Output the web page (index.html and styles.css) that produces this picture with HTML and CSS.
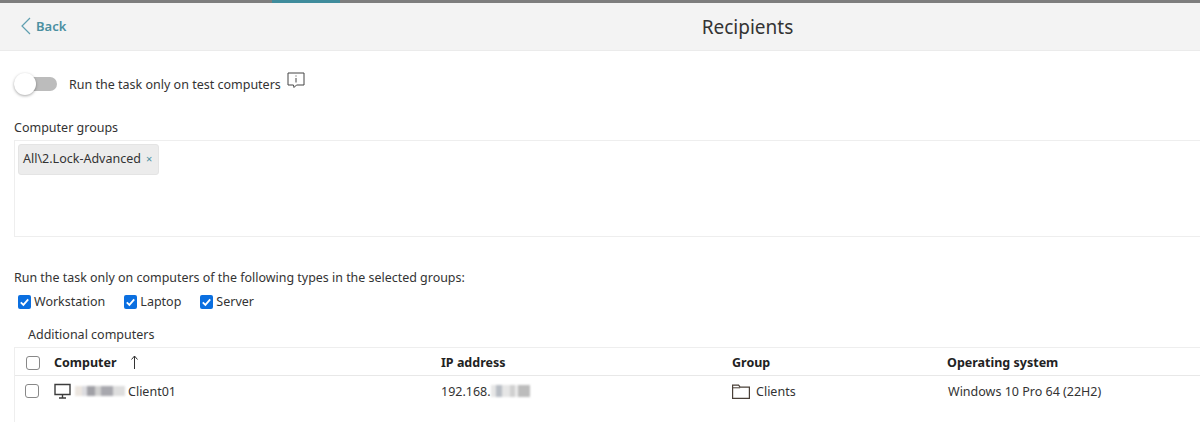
FILE: index.html
```html
<!DOCTYPE html>
<html lang="en">
<head>
    <meta charset="UTF-8">
    <title>Recipients</title>
    <link rel="stylesheet" href="styles.css">
</head>
<body>
    <div class="top-strip"><div class="top-strip-active"></div></div>
    <header class="header">
        <a class="back">
            <svg class="back-icon" width="10" height="18" viewBox="0 0 10 18"><path d="M9 1 1 9l8 8" fill="none" stroke="#5f9fb0" stroke-width="1.2"/></svg>
            Back
        </a>
        <h1 class="title">Recipients</h1>
    </header>
    <main class="content">
        <div class="test-row">
            <span class="switch"><span class="switch-knob"></span></span>
            <span>Run the task only on test computers</span>
            <svg class="info-icon" width="18" height="17" viewBox="0 0 18 17"><path d="M1 1h16v12H9.5L7 15.5 6.5 13H1z" fill="none" stroke="#444" stroke-width="1"/><path d="M9 3.5v1M9 6v4.5" stroke="#444" stroke-width="1"/></svg>
        </div>

        <div class="field-label">Computer groups</div>
        <div class="group-box">
            <span class="tag">All\2.Lock-Advanced<span class="tag-x">×</span></span>
        </div>

        <div class="types-label">Run the task only on computers of the following types in the selected groups:</div>
        <div class="types">
            <label class="type"><span class="check"><svg width="13" height="14" viewBox="0 0 13 14"><path d="M2.8 7.3 5.4 9.9 10.2 4.3" fill="none" stroke="#fff" stroke-width="1.8"/></svg></span>Workstation</label>
            <label class="type"><span class="check"><svg width="13" height="14" viewBox="0 0 13 14"><path d="M2.8 7.3 5.4 9.9 10.2 4.3" fill="none" stroke="#fff" stroke-width="1.8"/></svg></span>Laptop</label>
            <label class="type"><span class="check"><svg width="13" height="14" viewBox="0 0 13 14"><path d="M2.8 7.3 5.4 9.9 10.2 4.3" fill="none" stroke="#fff" stroke-width="1.8"/></svg></span>Server</label>
        </div>

        <div class="additional">Additional computers</div>
        <div class="table">
            <div class="table-row table-head">
                <div class="cell-check"><span class="box"></span></div>
                <div class="cell-computer">Computer
                    <svg class="sort-icon" width="9" height="14" viewBox="0 0 9 14"><path d="M4.5 1v13M1.5 4.5l3-3.5 3 3.5" fill="none" stroke="#333" stroke-width="1"/></svg>
                </div>
                <div class="cell-ip">IP address</div>
                <div class="cell-group">Group</div>
                <div class="cell-os">Operating system</div>
            </div>
            <div class="table-row table-body">
                <div class="cell-check"><span class="box box-body"></span></div>
                <div class="cell-computer">
                    <svg class="pc-icon" width="17" height="16" viewBox="0 0 17 16"><path d="M1 1.5h15v10H1z" fill="none" stroke="#3c3c3c" stroke-width="1.4"/><path d="M8.5 12v2.5M5 15h7" fill="none" stroke="#3c3c3c" stroke-width="1.4"/></svg>
                    <span class="blur blur-name"></span>Client01
                </div>
                <div class="cell-ip">192.168.<span class="blur blur-ip"></span></div>
                <div class="cell-group">
                    <svg class="folder-icon" width="18" height="15" viewBox="0 0 18 15"><path d="M.6 14.4V1.2h6l1.5 2h9.3v11.2z" fill="none" stroke="#4a4038" stroke-width="1.2"/><path d="M.6 3.8h7.5" stroke="#4a4038" stroke-width="1"/></svg>
                    Clients
                </div>
                <div class="cell-os">Windows 10 Pro 64 (22H2)</div>
            </div>
        </div>
    </main>
</body>
</html>
```

FILE: styles.css
```css
* {
    box-sizing: border-box;
}

html, body {
    height: 100%;
}

body {
    margin: 0;
    overflow: hidden;
    background-color: white;
    color: #333;
    font-family: "Noto Sans", "Open Sans", sans-serif;
    font-size: 12.5px;
}

.top-strip {
    height: 3px;
    background-color: #7d7d7d;
    padding-left: 272px;
}

.top-strip-active {
    width: 68px;
    height: 3px;
    background-color: #3f8c9c;
}

.header {
    display: flex;
    align-items: center;
    height: 48px;
    padding-left: 21px;
    background-color: #f3f3f3;
    border-bottom: 1px solid #ebebeb;
}

.back {
    display: flex;
    align-items: center;
    gap: 5px;
    width: 274px;
    margin-top: -2px;
    color: #4b8fa1;
    font-size: 13px;
    font-weight: 600;
}

.title {
    flex: 1;
    margin: 0 0 -1px;
    text-align: center;
    font-size: 19px;
    font-weight: 400;
    color: #333;
}

.content {
    padding: 0 0 0 14px;
}

.test-row {
    display: flex;
    align-items: center;
    height: 24px;
    margin-top: 21px;
}

.switch {
    position: relative;
    width: 43px;
    height: 14px;
    margin-right: 12px;
    background-color: #bcbcbc;
    border-radius: 7px;
}

.switch-knob {
    position: absolute;
    left: 0;
    top: -4px;
    width: 22px;
    height: 22px;
    background-color: white;
    border-radius: 50%;
    box-shadow: 0 1px 3px rgba(0, 0, 0, 0.35);
}

.info-icon {
    margin: -7px 0 0 6px;
}

.field-label {
    margin-top: 23px;
    line-height: 18px;
}

.group-box {
    height: 97px;
    margin-top: 3px;
    padding: 3px 3px;
    border: 1px solid #eee;
    border-right: none;
}

.tag {
    display: inline-block;
    width: 141px;
    height: 31px;
    padding: 0 4px;
    line-height: 27px;
    white-space: nowrap;
    background-color: #ececec;
    border: 1px solid #e4e4e4;
    border-radius: 3px;
}

.tag-x {
    margin-left: 5px;
    color: #4b8fa1;
    font-size: 11px;
}

.types-label {
    margin-top: 32px;
    line-height: 18px;
    font-size: 12.45px;
}

.types {
    display: flex;
    gap: 19px;
    margin: 6px 0 0 4px;
}

.type {
    display: flex;
    align-items: center;
    gap: 3px;
    line-height: 18px;
}

.check {
    display: flex;
    width: 13px;
    height: 14px;
    background-color: #0b6fe0;
    border-radius: 2px;
}

.additional {
    margin: 15px 0 0 14px;
    line-height: 18px;
}

.table {
    margin-top: 3px;
    border-top: 1px solid #eee;
    border-left: 1px solid #eee;
    height: 80px;
}

.table-row {
    display: flex;
    align-items: center;
}

.table-head {
    height: 28px;
    padding-top: 1px;
    border-bottom: 1px solid #e8e8e8;
    font-weight: 700;
    color: #222;
}

.table-body {
    height: 30px;
}

.cell-check {
    display: flex;
    width: 39px;
    padding-left: 11px;
}

.box {
    width: 14px;
    height: 14px;
    margin-top: 2px;
    border: 1px solid #888;
    border-radius: 3px;
    background-color: white;
}

.box-body {
    margin: 0 0 0 -1px;
}

.cell-computer {
    display: flex;
    align-items: center;
    width: 387px;
}

.cell-ip {
    display: flex;
    align-items: center;
    width: 291px;
}

.cell-group {
    display: flex;
    align-items: center;
    width: 215px;
}

.cell-os {
    padding-left: 1px;
}

.table-head .cell-os {
    padding-left: 0;
}

.sort-icon {
    margin-left: 13px;
}

.pc-icon {
    margin-right: 4px;
}

.folder-icon {
    margin-right: 6px;
}

.blur {
    display: inline-block;
    height: 10px;
    filter: blur(1.2px);
}

.blur-name {
    width: 50px;
    margin-right: 3px;
    background: linear-gradient(90deg, #ece6e0 0 14%, #dcdce0 14% 24%, #a0a0a6 24% 40%, #d0d0d0 40% 52%, #a8a8ae 52% 76%, #dedede 76% 100%);
}

.blur-ip {
    width: 39px;
    height: 12px;
    background: linear-gradient(90deg, #e6e6e6 0 14%, #b8bdc4 14% 28%, #e6e6e6 28% 50%, #d0d0d0 50% 62%, #ececec 62% 70%, #bcbcbc 70% 100%);
}
```
